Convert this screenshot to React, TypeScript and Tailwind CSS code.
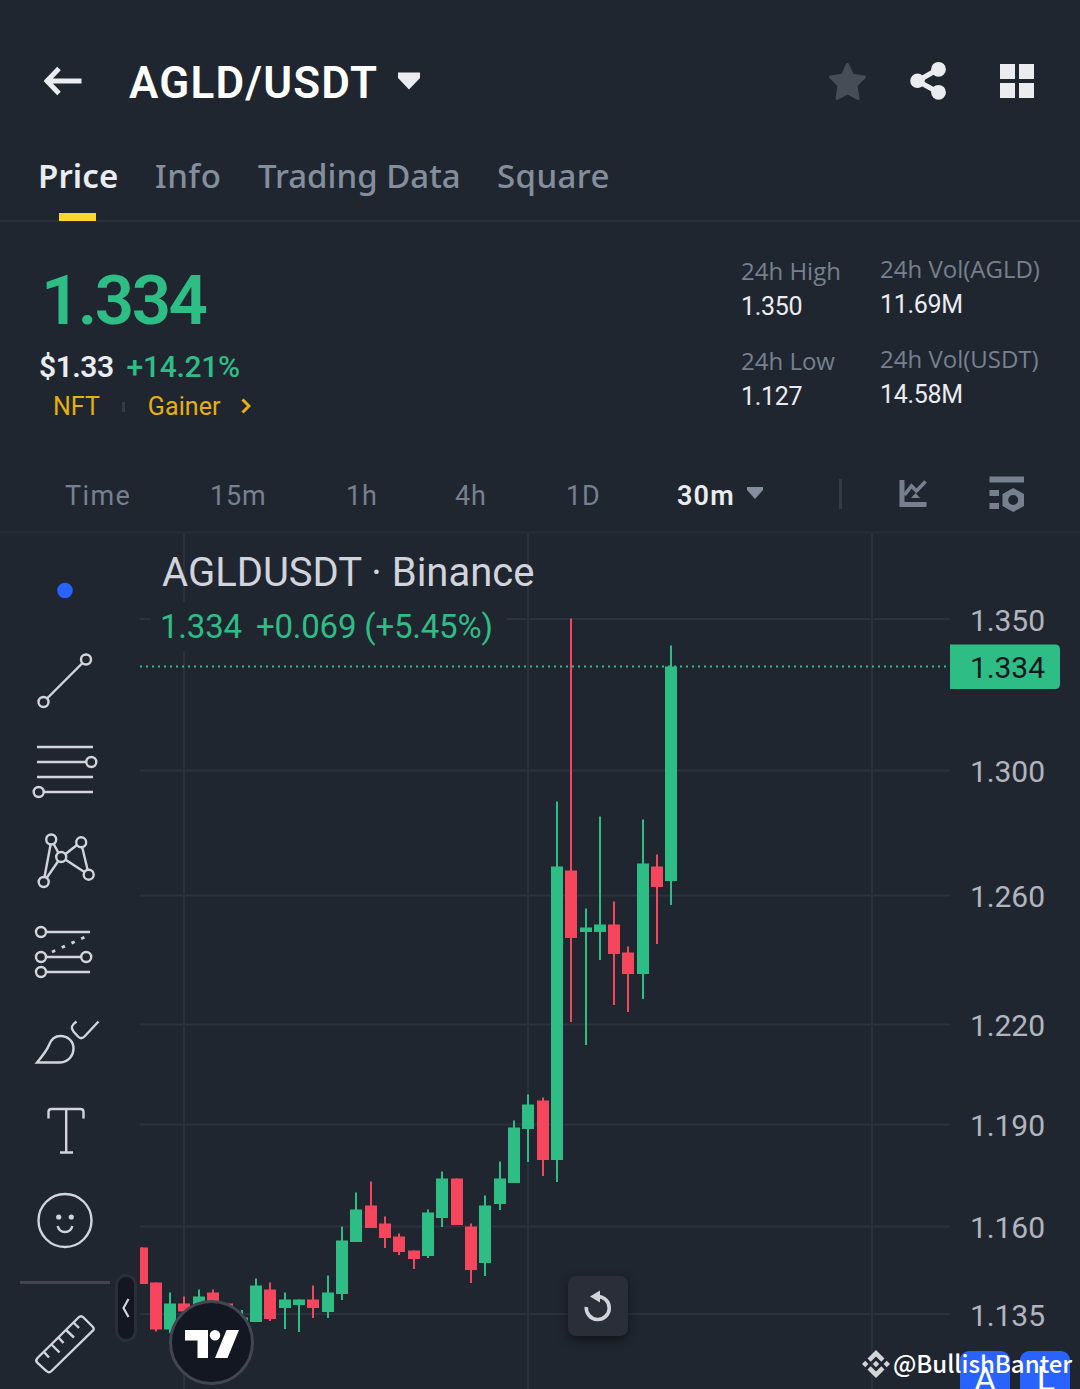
import { ReactNode } from 'react';

type Candle = [x: number, up: 0 | 1, high: number, top: number, bottom: number, low: number];

const UP = '#2ebd85';
const DOWN = '#f6465d';

// x, direction, high, body top, body bottom, low (in chart pixels)
const candles: Candle[] = [
  [142, 0, 1247.5, 1247.5, 1284, 1284],
  [156, 0, 1282.5, 1282.5, 1329.5, 1331.5],
  [170, 1, 1292.5, 1303.5, 1329.5, 1333],
  [184, 0, 1296.5, 1303.5, 1311.5, 1311.5],
  [199, 1, 1289.5, 1296.5, 1312, 1312],
  [213, 0, 1289.5, 1292.5, 1310, 1310],
  [227, 0, 1303.5, 1303.5, 1318, 1318],
  [242, 1, 1310, 1317.5, 1325, 1325],
  [256, 1, 1278.5, 1285.5, 1322, 1322],
  [270, 0, 1282.5, 1289.5, 1319, 1321],
  [285, 1, 1292.5, 1299.5, 1308, 1329],
  [299, 1, 1299.5, 1299.5, 1305, 1332],
  [313, 0, 1285.5, 1299.5, 1308, 1318],
  [328, 1, 1275.5, 1292.5, 1312, 1318],
  [342, 1, 1226.5, 1240.5, 1294, 1300],
  [356, 1, 1192.5, 1209.5, 1242, 1242],
  [371, 0, 1181.5, 1205.5, 1228, 1228],
  [385, 0, 1216.5, 1223.5, 1238, 1248],
  [399, 0, 1233.5, 1236.5, 1252, 1255],
  [414, 0, 1250.5, 1250.5, 1259, 1269],
  [428, 1, 1209.5, 1212.5, 1256, 1258],
  [442, 1, 1171.5, 1178.5, 1218, 1227],
  [457, 0, 1178.5, 1178.5, 1225, 1225],
  [471, 0, 1223.5, 1226.5, 1270, 1283],
  [485, 1, 1195.5, 1205.5, 1263, 1276],
  [500, 1, 1161.5, 1178.5, 1204, 1210],
  [514, 1, 1120.5, 1127.5, 1183, 1183],
  [528, 1, 1094.5, 1104.5, 1129, 1162],
  [543, 0, 1097.5, 1100.5, 1160, 1176],
  [557, 1, 801.5, 866.5, 1160, 1182],
  [571, 0, 618.5, 870.5, 938, 1022],
  [586, 1, 908.5, 927.5, 932, 1045],
  [600, 1, 816.5, 924.5, 932, 960],
  [614, 0, 901.5, 924.5, 954, 1005],
  [628, 0, 946.5, 952.5, 974, 1012],
  [643, 1, 819.5, 863.5, 974, 999],
  [657, 0, 854.5, 866.5, 887, 944],
  [671, 1, 645.5, 666.5, 881, 905],
];

const priceLevels = [
  { label: '1.350', y: 619 },
  { label: '1.300', y: 770.5 },
  { label: '1.260', y: 895.5 },
  { label: '1.220', y: 1024.5 },
  { label: '1.190', y: 1124.5 },
  { label: '1.160', y: 1226.5 },
  { label: '1.135', y: 1314 },
];

const timeLines = [184, 528, 872];

const stats = [
  { items: [['24h High', '1.350'], ['24h Low', '1.127']], className: 'pt-[31px] w-[139px]' },
  { items: [['24h Vol(AGLD)', '11.69M'], ['24h Vol(USDT)', '14.58M']], className: 'pt-[29px] w-[200px]' },
];

function Header() {
  return (
    <header className="flex h-[162px] items-center pl-11 pr-[46px]">
      <svg width="38" height="30" viewBox="44 66 38 30" fill="none" stroke="#eaecef" strokeWidth="5">
        <path d="M81.500 81H47M59 68.500L47 81L59 93.500" />
      </svg>
      <h1 className="ml-[47px] pt-1 font-['Roboto',sans-serif] text-[44px] font-semibold leading-none tracking-[1.2px] text-white">
        AGLD/USDT
      </h1>
      <svg className="ml-[19px] -mt-0.5" width="24" height="19" viewBox="0 0 24 19" fill="#eaecef">
        <path d="M1 1.500H23V7L12 18.500L1 7Z" />
      </svg>
      <div className="ml-auto flex items-center">
        <svg width="38" height="40" viewBox="828 61 38 40" fill="#474d57" stroke="#474d57" strokeWidth="3" strokeLinejoin="round">
          <path d="M847.500 64.500L852.600 75.300L864.500 77L856 85.500L858 98.500L847.500 93L837 98.500L839 85.500L830.500 77L842.400 75.300Z" />
        </svg>
        <svg className="ml-11" width="37" height="40" viewBox="910 61 37 40" fill="#eaecef">
          <path d="M938.500 69L917.500 81L938.500 92.500" fill="none" stroke="#eaecef" strokeWidth="5" />
          <circle cx="917.500" cy="80.800" r="7.300" />
          <circle cx="938.500" cy="69.300" r="7.400" />
          <circle cx="938.500" cy="92.300" r="7.400" />
        </svg>
        <div className="ml-[53px] grid grid-cols-2 gap-1">
          <i className="size-[15px] bg-[#eaecef]" />
          <i className="size-[15px] bg-[#eaecef]" />
          <i className="size-[15px] bg-[#eaecef]" />
          <i className="size-[15px] bg-[#eaecef]" />
        </div>
      </div>
    </header>
  );
}

function Tabs() {
  return (
    <nav className="flex h-[60px] items-start border-b-2 border-[#29303a] pl-[38px] font-['Noto_Sans',sans-serif] text-[33px] font-medium leading-7 text-[#848e9c]">
      <div className="relative h-[59px] w-[117px] font-semibold tracking-[0.1px] text-[#eaecef]">
        Price
        <span className="absolute left-[21px] top-[51px] h-2 w-[37px] bg-[#fcd535]" />
      </div>
      <div className="w-[103px] tracking-[0.5px]">Info</div>
      <div className="w-[239px] whitespace-nowrap">Trading Data</div>
      <div className="tracking-[0.4px]">Square</div>
    </nav>
  );
}

function Summary() {
  return (
    <section className="flex h-[238px] justify-between pl-[39px] font-['Roboto',sans-serif]">
      <div className="pt-11">
        <div className="h-[70px] pl-0.5 text-[69px] font-semibold leading-[70px] tracking-[-2.6px] text-[#2ebd85]">1.334</div>
        <div className="mt-2.5 flex h-10 items-center gap-[13px] text-[30px]">
          <span className="font-semibold tracking-[-0.5px] text-[#eaecef]">$1.33</span>
          <span className="font-medium tracking-[-0.3px] text-[#2ebd85]">+14.21%</span>
        </div>
        <div className="flex h-[42px] items-center pl-3.5 text-[25px] text-[#e6b012]">
          <span>NFT</span>
          <span className="ml-[22px] h-2.5 w-[3px] bg-[#333b47]" />
          <span className="ml-[23px] tracking-[0.1px]">Gainer</span>
          <svg className="ml-5 -mt-0.5" width="10" height="16" viewBox="0 0 10 16" fill="none" stroke="#e6b012" strokeWidth="3">
            <path d="M1.500 1.500L8 8L1.500 14.500" />
          </svg>
        </div>
      </div>
      <div className="flex">
        {stats.map((col, i) => (
          <div key={i} className={col.className}>
            {col.items.map(([label, value]) => (
              <div key={label} className="mb-5">
                <div className="h-[35px] whitespace-nowrap font-['Open_Sans',sans-serif] text-[24px] leading-9 text-[#76808f]">{label}</div>
                <div className="h-[35px] text-[25px] leading-[37px] tracking-[-0.3px] text-[#eaecef]">{value}</div>
              </div>
            ))}
          </div>
        ))}
      </div>
    </section>
  );
}

function IntervalBar() {
  return (
    <div className="flex h-[74px] items-center border-b-[3px] border-[#252b35] pl-[65px] pt-0.5 font-['Roboto',sans-serif] text-[27px] text-[#76808f]">
      <span className="w-[145px] tracking-[1.4px]">Time</span>
      <span className="w-[136px] tracking-[0.8px]">15m</span>
      <span className="w-[109px] tracking-[0.8px]">1h</span>
      <span className="w-[111px] tracking-[0.8px]">4h</span>
      <span className="w-[111px] tracking-[0.8px]">1D</span>
      <span className="font-semibold tracking-[1.2px] text-[#eaecef]">30m</span>
      <svg className="ml-3 -mt-2" width="16" height="12" viewBox="0 0 16 12" fill="#848e9c">
        <path d="M0 0H16V3L8 12L0 3Z" />
      </svg>
      <span className="ml-[76px] -mt-1.5 h-[30px] w-[3px] bg-[#333b47]" />
      <svg className="ml-[57px] -mt-2" width="28" height="28" viewBox="899 479 28 28" fill="#76808f">
        <path d="M899.500 480H904.500V502H926.500V507H899.500Z" />
        <path d="M904.500 495L911.500 486L916.500 491L925.500 481.500" fill="none" stroke="#76808f" strokeWidth="3.600" />
        <path d="M915.500 493L920 498H911Z" />
      </svg>
      <svg className="ml-[62px] -mt-1.5" width="36" height="38" viewBox="989 475 36 38" fill="#76808f">
        <path d="M989.500 476.500H1024V482.500H989.500ZM989.500 490H999V496H989.500ZM989.500 503H999V509H989.500Z" />
        <path fillRule="evenodd" d="M1013.200 488L1024 494V506L1013.200 512L1002.500 506V494ZM1013.200 495A5 5 0 1 0 1013.200 505A5 5 0 1 0 1013.200 495Z" />
      </svg>
    </div>
  );
}

function ToolIcon({ children }: { children: ReactNode }) {
  return (
    <button className="flex h-[90px] w-[130px] items-center justify-center">
      <svg width="90" height="90" viewBox="0 0 90 90" fill="none" stroke="#d1d4dc" strokeWidth="2.400">
        {children}
      </svg>
    </button>
  );
}

function DrawingToolbar() {
  return (
    <aside className="flex w-[140px] shrink-0 flex-col pt-[11px]">
      <ToolIcon>
        <circle cx="45" cy="45.500" r="7.800" fill="#2962ff" stroke="none" />
      </ToolIcon>
      {/* Trend line */}
      <ToolIcon>
        <circle cx="66" cy="24.500" r="5" />
        <circle cx="23.500" cy="67" r="5" />
        <path d="M27 63.500L62.500 28" />
      </ToolIcon>
      {/* Fib retracement */}
      <ToolIcon>
        <path d="M17 22H73M17 37H66M17 52H73M24 67H73" />
        <circle cx="71.300" cy="37" r="5" />
        <circle cx="18.700" cy="67" r="5" />
      </ToolIcon>
      {/* Pattern */}
      <ToolIcon>
        <circle cx="31.200" cy="24.500" r="5" />
        <circle cx="61.200" cy="27.300" r="5" />
        <circle cx="41.200" cy="42" r="5" />
        <circle cx="23.700" cy="67" r="5" />
        <circle cx="68.700" cy="59.700" r="5" />
        <path d="M30.600 29.500L24.500 62M33.700 29L38.500 38M45.500 39L57 30M62.200 32.200L67.600 54.700M45.600 44.700L64.400 57M38.300 46L26.600 63" />
      </ToolIcon>
      {/* Prediction */}
      <ToolIcon>
        <circle cx="21" cy="27" r="5" />
        <circle cx="21" cy="52" r="5" />
        <circle cx="21" cy="67" r="5" />
        <circle cx="66.200" cy="52" r="5" />
        <path d="M26 27H70M26 52H61M26 67H70" />
        <path d="M32 47L66 31.500" strokeDasharray="3.500 7.200" strokeWidth="2.800" />
      </ToolIcon>
      {/* Brush */}
      <ToolIcon>
        <path d="M17 67.500H40C49 67 53.500 60 53.500 53.500C53.500 46 47.500 41 40.500 41C34.500 41 31 44.500 29 50C27 55.500 22 61.500 17 67.500Z" />
        <path d="M56.500 26.500C51.500 30 50.500 33 53.500 36.500L58 41.500C60 43.500 62.500 43.500 64.500 41.500L78.500 26.500" />
      </ToolIcon>
      {/* Text */}
      <ToolIcon>
        <path d="M28.500 33.500V27Q28.500 24 31.500 24H60.500Q63.500 24 63.500 27V33.500M46.200 24V67M40 67.500H53" />
      </ToolIcon>
      {/* Emoji */}
      <ToolIcon>
        <circle cx="45" cy="45.500" r="26.500" />
        <circle cx="38.700" cy="42" r="2.600" fill="#d1d4dc" stroke="none" />
        <circle cx="51.300" cy="42" r="2.600" fill="#d1d4dc" stroke="none" />
        <path d="M37.700 51Q39 57 45 57Q51 57 52.300 51" />
      </ToolIcon>
      <div className="ml-5 mt-4 h-[3px] w-[90px] shrink-0 bg-[#434651]" />
      <div className="mt-2.5">
        {/* Measure */}
        <ToolIcon>
          <path d="M17.500 64L58.500 23.500Q61 21 63.500 23.500L72.500 32.500Q75 35 72.500 37L31.500 77Q29 79.500 26.500 77L17.500 69Q15 66.500 17.500 64ZM24 58L29 63.500M31.500 50.500L39.500 58.500M38.500 43.500L43.500 49M46 36L54 43.500M53.500 28.500L59 34" />
        </ToolIcon>
      </div>
    </aside>
  );
}

function PriceChart() {
  return (
    <svg width="940" height="855" viewBox="140 534 940 855" className="block font-['Roboto',sans-serif]">
      <g stroke="#2c323d" strokeWidth="2">
        {priceLevels.map(({ y }) => (
          <line key={y} x1="140" x2="950" y1={y} y2={y} />
        ))}
        {timeLines.map((x) => (
          <line key={x} x1={x} x2={x} y1="533" y2="1389" />
        ))}
      </g>
      <rect x="151" y="602" width="356" height="49" fill="#202630" />
      <line x1="140" x2="948" y1="666.500" y2="666.500" stroke={UP} strokeWidth="2" strokeDasharray="2 4" />
      {candles.map(([x, up, high, top, bottom, low]) => (
        <g key={x} fill={up ? UP : DOWN}>
          <rect x={x - 1} y={high} width="2" height={low - high} />
          <rect x={x - 6} y={top} width="12" height={bottom - top} />
        </g>
      ))}
      <g fill="#b2b5be" fontSize="30">
        {priceLevels.map(({ label, y }) => (
          <text key={label} x="970" y={y + 11.9} textLength="75">{label}</text>
        ))}
      </g>
      <path d="M950 644.500H1055Q1060 644.500 1060 649.500V684Q1060 689 1055 689H950Z" fill={UP} />
      <text x="970" y="678" fontSize="30" fill="#131722" textLength="75">1.334</text>
      <rect x="960" y="1351" width="50" height="50" rx="9" fill="#2962ff" />
      <rect x="1020" y="1351" width="50" height="50" rx="9" fill="#2962ff" />
      <g fill="#fff" fontSize="34" textAnchor="middle">
        <text x="985" y="1391">A</text>
        <text x="1046" y="1390">L</text>
      </g>
    </svg>
  );
}

function ChartOverlays() {
  return (
    <>
      {/* Legend */}
      <div className="absolute left-[162px] top-[17px] whitespace-nowrap font-['Roboto',sans-serif]">
        <div className="text-[40px] leading-[44px] text-[#d1d4dc]">AGLDUSDT · Binance</div>
        <div className="-ml-0.5 mt-2.5 flex gap-3.5 text-[33px] leading-[44px] tracking-[-0.2px] text-[#2ebd85]">
          <span>1.334</span>
          <span>+0.069 (+5.45%)</span>
        </div>
      </div>

      {/* Toolbar toggle */}
      <button className="absolute left-[115px] top-[740px] flex h-[68px] w-[22px] items-center justify-center rounded-full border-[3px] border-[#2a2e39] bg-[#131722]">
        <svg width="8" height="20" viewBox="0 0 8 20" fill="none" stroke="#d1d4dc" strokeWidth="2.200">
          <path d="M6.500 1L1.500 10L6.500 19" />
        </svg>
      </button>

      {/* TradingView badge */}
      <div className="absolute left-[169px] top-[766px] flex size-[85px] items-center justify-center rounded-full border-[3px] border-[#434651] bg-[#131722]">
        <svg className="mt-0.5" width="54" height="28" viewBox="0 0 54 28" fill="#fff">
          <path d="M0 0H23V28H12.500V10.500H0Z" />
          <circle cx="30" cy="5.200" r="5.200" />
          <path d="M41.500 0H54L42.500 28H30Z" />
        </svg>
      </div>

      <button className="absolute left-[568px] top-[742px] flex size-[60px] items-center justify-center rounded-lg bg-[#2a2e39] shadow-[0_4px_10px_rgba(10,13,20,0.7)]">
        <svg width="28" height="32" viewBox="0 0 28 32" fill="none" stroke="#d1d4dc" strokeWidth="3.600">
          <path d="M2.300 17A11.500 11.500 0 1 0 13.500 6.500" />
          <path d="M16 0.500V12.500L6 6.500Z" fill="#d1d4dc" stroke="none" />
        </svg>
      </button>

      {/* Watermark */}
      <div className="absolute left-[862px] top-[815px] flex items-center gap-[3px] font-['Noto_Sans_CJK_SC',sans-serif] text-[24px] font-medium leading-8 text-white">
        <svg width="28" height="28" viewBox="0 0 28 28" fill="#d4d5d8">
          <path d="M14 0L22.500 8.500L19.300 11.700L14 6.400L8.700 11.700L5.500 8.500ZM14 28L22.500 19.500L19.300 16.300L14 21.600L8.700 16.300L5.500 19.500ZM14 10.800L17.200 14L14 17.200L10.800 14ZM3.200 10.800L6.400 14L3.200 17.200L0 14ZM24.800 10.800L28 14L24.800 17.200L21.600 14Z" />
        </svg>
        <span className="-mt-0.5">@BullishBanter</span>
      </div>
    </>
  );
}

export default function App() {
  return (
    <div className="h-[1389px] w-[1080px] overflow-hidden bg-[#202630]">
      <Header />
      <Tabs />
      <Summary />
      <IntervalBar />
      <main className="relative flex h-[855px] overflow-hidden">
        <DrawingToolbar />
        <PriceChart />
        <ChartOverlays />
      </main>
    </div>
  );
}
